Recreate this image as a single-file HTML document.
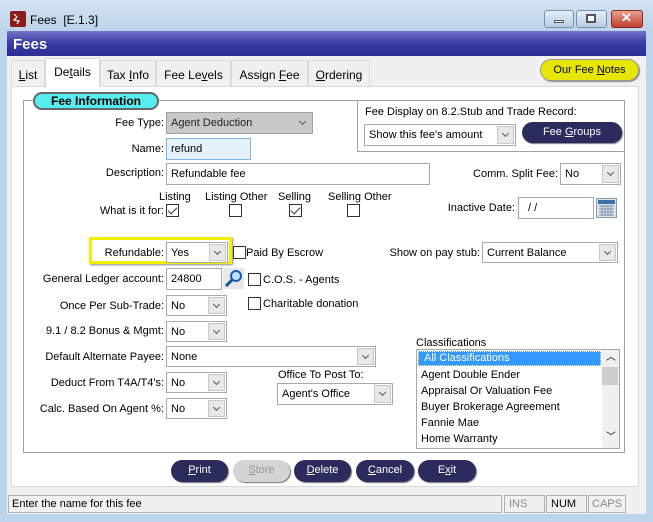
<!DOCTYPE html>
<html><head><style>
*{box-sizing:border-box}
body{margin:0;width:653px;height:522px;overflow:hidden;font-family:"Liberation Sans",Arial,sans-serif;font-size:11px;color:#000;background:#bcd4ec;position:relative}
.a{position:absolute}
.lbl{position:absolute;white-space:nowrap;font-size:11px;line-height:14px}
.r{text-align:right}
.sel{position:absolute;background:#fff;border:1px solid #a9a9a9;font-size:11px;line-height:20px;padding-left:4px;white-space:nowrap}
.sel .dd{position:absolute;right:1px;top:1px;bottom:1px;width:17px;background:#e8e8e8;border:1px solid #c8c8c8}
.sel .dd:after{content:"";position:absolute;left:5px;top:4px;width:4px;height:4px;border-right:1px solid #555;border-bottom:1px solid #555;transform:rotate(45deg)}
.inp{position:absolute;background:#fff;border:1px solid #a9a9a9;font-size:11px;line-height:20px;padding-left:4px}
.cb{position:absolute;width:13px;height:13px;border:1px solid #333;background:#fff}
.cb.k:after{content:"";position:absolute;left:3px;top:0px;width:4px;height:8px;border-right:1px solid #333;border-bottom:1px solid #333;transform:rotate(45deg)}
.tab{position:absolute;top:60px;height:26px;border:1px solid #d9d9d9;border-bottom:none;background:#f0f0f0;line-height:28px;text-align:center;font-size:12px}
.btn{position:absolute;top:460px;height:22px;border-radius:11px;background:#2b2b5e;color:#fff;text-align:center;line-height:21px;font-size:11px;box-shadow:1px 1px 1px #777}
</style></head><body>
<div class="a" style="left:0;top:0;width:653px;height:33px;background:linear-gradient(#d2e2f2,#bcd3ea)"></div>
<div class="a" style="left:10px;top:11px;width:16px;height:16px;background:#8c1a1a;border-radius:2px"></div>
<svg class="a" style="left:10px;top:11px" width="16" height="16"><path d="M4 3 L7 6 L4 9 L9 10 L7 13" stroke="#fff" fill="none" stroke-width="1.2"/></svg>
<div class="lbl" style="left:30px;top:13px;font-size:12px">Fees&nbsp; [E.1.3]</div>
<div class="a" style="left:544px;top:10px;width:30px;height:18px;border:1px solid #7690ad;border-radius:3px;background:linear-gradient(#e4eef8,#b8cde3)"></div>
<div class="a" style="left:554px;top:20px;width:10px;height:3px;background:#fff;border:1px solid #555"></div>
<div class="a" style="left:576px;top:10px;width:31px;height:18px;border:1px solid #7690ad;border-radius:3px;background:linear-gradient(#e4eef8,#b8cde3)"></div>
<div class="a" style="left:586px;top:14px;width:10px;height:9px;border:2px solid #555;background:#fff"></div>
<div class="a" style="left:611px;top:10px;width:32px;height:18px;border:1px solid #8a2a20;border-radius:3px;background:linear-gradient(#e8a090,#c0402c)"></div>
<div class="lbl" style="left:621px;top:11px;color:#fff;font-weight:bold;font-size:13px">✕</div>
<div class="a" style="left:7px;top:31px;width:639px;height:483px;background:#f0f0f0"></div>
<div class="a" style="left:7px;top:31px;width:639px;height:25px;background:linear-gradient(#7474c8,#3a3aa4 50%,#2c2c94)"></div>
<div class="lbl" style="left:13px;top:36px;color:#fff;font-weight:bold;font-size:15px;line-height:17px">Fees</div>
<div class="tab" style="left:11px;width:34px"><u>L</u>ist</div>
<div class="tab" style="left:100px;width:56px">Tax <u>I</u>nfo</div>
<div class="tab" style="left:156px;width:75px">Fee Le<u>v</u>els</div>
<div class="tab" style="left:231px;width:77px">Assign <u>F</u>ee</div>
<div class="tab" style="left:308px;width:62px"><u>O</u>rdering</div>
<div class="a" style="left:11px;top:86px;width:628px;height:401px;background:#fff;border:1px solid #d9d9d9"></div>
<div class="tab" style="left:45px;top:58px;width:55px;height:29px;background:#fff;line-height:26px">De<u>t</u>ails</div>
<div class="a" style="left:540px;top:59px;width:99px;height:22px;border-radius:11px;background:#e6e600;border:1px solid #999;text-align:center;line-height:20px;font-size:11px;box-shadow:1px 1px 1px #888">Our Fee <u>N</u>otes</div>
<div class="a" style="left:23px;top:100px;width:602px;height:353px;border:1px solid #a0a0a0"></div>
<div class="a" style="left:357px;top:100px;width:268px;height:52px;border:1px solid #a0a0a0;background:#fff"></div>
<div class="a" style="left:33px;top:92px;width:126px;height:18px;border-radius:9px;background:#55eef0;border:2px solid #666;text-align:center;line-height:14px;font-weight:bold;font-size:12px">Fee Information</div>
<div class="lbl r" style="left:60px;width:104px;top:116px">Fee Type:</div>
<div class="sel" style="left:166px;top:112px;width:147px;height:22px;background:#c8c8c8;border-color:#a0a0a0;color:#222">Agent Deduction<span class="dd" style="background:#c8c8c8;border-color:#c8c8c8"></span></div>
<div class="lbl r" style="left:60px;width:104px;top:142px">Name:</div>
<div class="inp" style="left:166px;top:138px;width:85px;height:22px;background:#e5f1fb;border-color:#7eb4ea">refund</div>
<div class="lbl r" style="left:60px;width:104px;top:166px">Description:</div>
<div class="inp" style="left:166px;top:163px;width:264px;height:22px">Refundable fee</div>
<div class="lbl" style="left:159px;top:190px">Listing</div>
<div class="lbl" style="left:205px;top:190px">Listing Other</div>
<div class="lbl" style="left:278px;top:190px">Selling</div>
<div class="lbl" style="left:328px;top:190px">Selling Other</div>
<div class="lbl r" style="left:60px;width:104px;top:204px">What is it for:</div>
<div class="cb k" style="left:166px;top:204px"></div>
<div class="cb" style="left:229px;top:204px"></div>
<div class="cb k" style="left:289px;top:204px"></div>
<div class="cb" style="left:347px;top:204px"></div>
<div class="a" style="left:89px;top:237px;width:143px;height:27px;border:3px solid #f0f000;box-shadow:1px 1px 2px #888"></div>
<div class="lbl r" style="left:60px;width:104px;top:246px">Refundable:</div>
<div class="sel" style="left:166px;top:242px;width:62px;height:21px">Yes<span class="dd"></span></div>
<div class="cb" style="left:233px;top:246px"></div>
<div class="lbl" style="left:246px;top:246px">Paid By Escrow</div>
<div class="lbl r" style="left:20px;width:144px;top:272px">General Ledger account:</div>
<div class="inp" style="left:166px;top:268px;width:56px;height:22px">24800</div>
<svg class="a" style="left:223px;top:268px" width="21" height="21"><rect x="0" y="0" width="21" height="21" fill="#e8e8e8"/><circle cx="13" cy="8" r="5" fill="#bfe0ff" stroke="#1a5ea8" stroke-width="2"/><path d="M9 12 L3 18" stroke="#1a4e98" stroke-width="3"/></svg>
<div class="cb" style="left:248px;top:273px"></div>
<div class="lbl" style="left:263px;top:273px">C.O.S. - Agents</div>
<div class="lbl r" style="left:20px;width:144px;top:299px">Once Per Sub-Trade:</div>
<div class="sel" style="left:166px;top:295px;width:61px;height:21px">No<span class="dd"></span></div>
<div class="cb" style="left:248px;top:297px"></div>
<div class="lbl" style="left:263px;top:297px">Charitable donation</div>
<div class="lbl r" style="left:20px;width:144px;top:324px">9.1 / 8.2 Bonus &amp; Mgmt:</div>
<div class="sel" style="left:166px;top:321px;width:61px;height:21px">No<span class="dd"></span></div>
<div class="lbl r" style="left:20px;width:144px;top:350px">Default Alternate Payee:</div>
<div class="sel" style="left:166px;top:346px;width:210px;height:21px">None<span class="dd"></span></div>
<div class="lbl r" style="left:20px;width:144px;top:376px">Deduct From T4A/T4's:</div>
<div class="sel" style="left:166px;top:372px;width:61px;height:21px">No<span class="dd"></span></div>
<div class="lbl r" style="left:20px;width:144px;top:402px">Calc. Based On Agent %:</div>
<div class="sel" style="left:166px;top:398px;width:61px;height:21px">No<span class="dd"></span></div>
<div class="lbl" style="left:278px;top:368px">Office To Post To:</div>
<div class="sel" style="left:277px;top:383px;width:116px;height:22px">Agent's Office<span class="dd"></span></div>
<div class="lbl" style="left:365px;top:105px">Fee Display on 8.2.Stub and Trade Record:</div>
<div class="sel" style="left:364px;top:124px;width:152px;height:22px">Show this fee's amount<span class="dd"></span></div>
<div class="a" style="left:522px;top:122px;width:100px;height:21px;border-radius:11px;background:#2b2b5e;color:#fff;text-align:center;line-height:20px;font-size:11px;box-shadow:1px 1px 1px #777">Fee <u>G</u>roups</div>
<div class="lbl r" style="left:440px;width:118px;top:167px">Comm. Split Fee:</div>
<div class="sel" style="left:560px;top:163px;width:61px;height:22px">No<span class="dd"></span></div>
<div class="lbl r" style="left:400px;width:115px;top:201px">Inactive Date:</div>
<div class="inp" style="left:518px;top:197px;width:76px;height:22px;padding-left:9px">/ /</div>
<svg class="a" style="left:596px;top:198px" width="21" height="20"><rect x="0.5" y="0.5" width="20" height="19" fill="#dde6ee" stroke="#8899aa"/><rect x="2" y="2" width="17" height="4" fill="#3e70a8"/><path d="M3 8h15M3 11h15M3 14h15M3 17h15M6 7v11M9 7v11M12 7v11M15 7v11" stroke="#7f93a8" stroke-width="1"/></svg>
<div class="lbl r" style="left:360px;width:120px;top:246px">Show on pay stub:</div>
<div class="sel" style="left:482px;top:242px;width:136px;height:21px">Current Balance<span class="dd"></span></div>
<div class="lbl" style="left:416px;top:336px">Classifications</div>
<div class="a" style="left:416px;top:349px;width:204px;height:100px;border:1px solid #a9a9a9;background:#fff"></div>
<div class="a" style="left:418px;top:351px;width:183px;height:15px;background:#3399ff;border:1px dotted #ffd;color:#fff;line-height:13px;padding-left:5px">All Classifications</div>
<div class="lbl" style="left:421px;top:367px;line-height:16px">Agent Double Ender<br>Appraisal Or Valuation Fee<br>Buyer Brokerage Agreement<br>Fannie Mae<br>Home Warranty</div>
<div class="a" style="left:602px;top:350px;width:17px;height:98px;background:#f0f0f0"></div>
<div class="a" style="left:602px;top:367px;width:16px;height:18px;background:#cdcdcd"></div>
<div class="lbl" style="left:606px;top:351px;font-size:10px">︿</div>
<div class="lbl" style="left:606px;top:431px;font-size:10px">﹀</div>
<div class="btn" style="left:171px;width:57px"><u>P</u>rint</div>
<div class="btn" style="left:233px;width:57px;background:#d4d4d4;color:#999"><u>S</u>tore</div>
<div class="btn" style="left:294px;width:57px"><u>D</u>elete</div>
<div class="btn" style="left:356px;width:58px"><u>C</u>ancel</div>
<div class="btn" style="left:418px;width:58px">E<u>x</u>it</div>
<div class="a" style="left:8px;top:495px;width:494px;height:18px;border:1px solid #b0b0b0;line-height:16px;padding-left:3px">Enter the name for this fee</div>
<div class="a" style="left:504px;top:495px;width:41px;height:18px;border:1px solid #b0b0b0;line-height:16px;padding-left:4px;color:#888">INS</div>
<div class="a" style="left:546px;top:495px;width:41px;height:18px;border:1px solid #b0b0b0;line-height:16px;padding-left:4px">NUM</div>
<div class="a" style="left:588px;top:495px;width:38px;height:18px;border:1px solid #b0b0b0;line-height:16px;padding-left:3px;color:#888">CAPS</div>
</body></html>
